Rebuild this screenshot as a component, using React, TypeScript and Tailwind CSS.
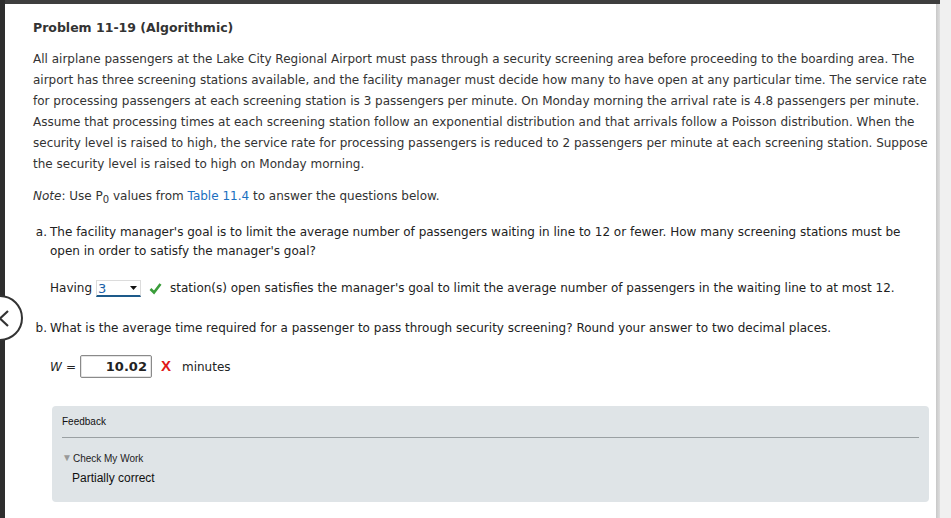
import React from "react";

const VERDANA = "font-['Verdana','DejaVu_Sans',sans-serif]";
const ARIAL = "font-['Liberation_Sans',Arial,sans-serif]";

function BackCircle() {
  return (
    <div className="absolute left-[-23px] top-[295px] h-[46px] w-[46px] rounded-full border-2 border-[#333] bg-white">
      <svg width="12" height="17" viewBox="0 0 12 17" className="absolute left-[19px] top-[13px]">
        <path d="M10 1 L2 8.5 L10 16" fill="none" stroke="#333" strokeWidth="2.2" />
      </svg>
    </div>
  );
}

function StationSelect() {
  return (
    <span className="mx-[4px] inline-flex h-[17px] w-[45px] items-center justify-between border border-b-2 border-[#dcdcdc] border-b-[#1d5a8a] pl-[1px] pr-[3px] align-middle text-[#1a5fa8]">
      <span className="leading-none text-[13px]">3</span>
      <svg width="7" height="4" viewBox="0 0 7 4">
        <path d="M0 0 H7 L3.5 4 Z" fill="#111" />
      </svg>
    </span>
  );
}

function Check() {
  return (
    <svg width="13" height="13" viewBox="0 0 13 13" className="ml-[4px] mr-[8px]">
      <path d="M1.5 7 L5 10.5 L11.5 2" fill="none" stroke="#3a9d3a" strokeWidth="2.6" />
    </svg>
  );
}

export default function App() {
  return (
    <div className="relative flex h-[518px] w-[951px] overflow-hidden bg-[#f0f0f0]">
      <div className="w-[5px] flex-shrink-0 bg-[#2e2e2e]" />
      <div className="flex w-[935px] flex-shrink-0 flex-col">
        <div className="h-[4px] bg-[#3e3e3e]" />
        <div className="flex flex-1">
          <main className={`w-[931px] bg-white pl-[28px] pr-[7px] pt-[13px] text-[12px] text-[#333] ${VERDANA}`}>
            <h1 className="text-[12.5px] font-bold leading-[21px] text-[#333]">Problem 11-19 (Algorithmic)</h1>
            <p className="mt-[11px] leading-[21px]">
              All airplane passengers at the Lake City Regional Airport must pass through a security screening area before proceeding to the boarding area. The airport has three screening stations available, and the facility manager must decide how many to have open at any particular time. The service rate for processing passengers at each screening station is 3 passengers per minute. On Monday morning the arrival rate is 4.8 passengers per minute. Assume that processing times at each screening station follow an exponential distribution and that arrivals follow a Poisson distribution. When the security level is raised to high, the service rate for processing passengers is reduced to 2 passengers per minute at each screening station. Suppose the security level is raised to high on Monday morning.
            </p>
            <p className="mt-[11px] leading-[21px]">
              <i>Note</i>: Use P<sub className="text-[10px]">0</sub> values from{" "}
              <span className="text-[#1a6fc0]">Table 11.4</span> to answer the questions below.
            </p>

            <div className="mt-[16px] flex text-[#222] leading-[19px]">
              <span className="w-[17px] flex-shrink-0 text-right pr-[3px]">a.</span>
              <div className="pr-[12px]">
                The facility manager's goal is to limit the average number of passengers waiting in line to 12 or fewer. How many screening stations must be open in order to satisfy the manager's goal?
              </div>
            </div>
            <div className="mt-[18px] flex items-center pl-[17px] text-[#222] leading-[19px]">
              <span>Having</span>
              <StationSelect />
              <Check />
              <span>station(s) open satisfies the manager's goal to limit the average number of passengers in the waiting line to at most 12.</span>
            </div>

            <div className="mt-[21px] flex text-[#222] leading-[19px]">
              <span className="w-[17px] flex-shrink-0 text-right pr-[3px]">b.</span>
              <div>What is the average time required for a passenger to pass through security screening? Round your answer to two decimal places.</div>
            </div>
            <div className="mt-[17px] flex items-center pl-[17px] text-[#222]">
              <span className="italic">W</span>
              <span className="ml-[4px] mr-[4px]">=</span>
              <span className="flex h-[23px] w-[72px] items-center justify-end rounded-[2px] border border-[#8a8a8a] pr-[4px] text-[13px] font-bold text-[#222] shadow-[inset_0_0_0_1px_#e5e5e5]">
                10.02
              </span>
              <span className={`ml-[9px] mr-[11px] text-[15px] font-bold text-[#e01818] ${ARIAL}`}>X</span>
              <span>minutes</span>
            </div>

            <section className={`mt-[28px] ml-[19px] h-[96px] rounded-[4px] bg-[#dfe4e7] px-[10px] pt-[9px] text-[#111] ${ARIAL}`}>
              <div className="text-[10px] leading-[13px]">Feedback</div>
              <div className="mt-[9px] h-px bg-[#9aa0a3]" />
              <div className="mt-[14px] flex items-start text-[10px] leading-[13px]">
                <span className="mr-[1px] text-[10px] leading-[11px] text-[#999]">▼</span>
                <span className="text-[#222]">Check My Work</span>
              </div>
              <div className="mt-[6px] pl-[10px] text-[12px] leading-[15px] text-[#111]">Partially correct</div>
            </section>
          </main>
          <div className="w-[4px] bg-[linear-gradient(to_right,#c8c8c8,#dedede)]" />
        </div>
      </div>
      <div className="flex-1 bg-[#f0f0f0]" />
      <BackCircle />
    </div>
  );
}
